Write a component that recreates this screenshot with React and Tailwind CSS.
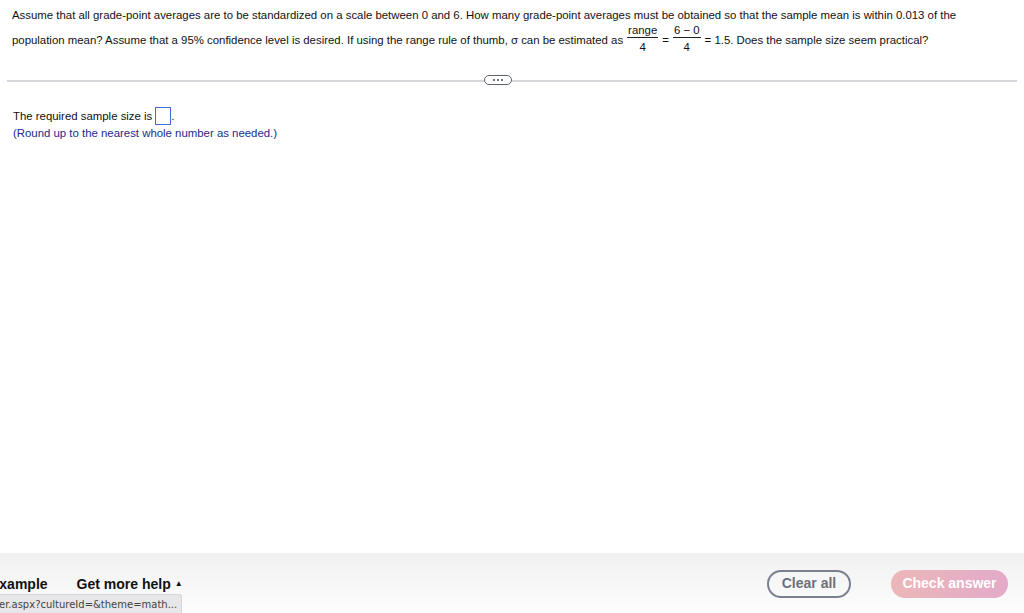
import React from "react";

function Frac({ num, den }) {
  return (
    <span className="inline-flex flex-col items-center align-middle mx-[4px] relative top-[-1px]">
      <span className="px-[1px] leading-[14px]">{num}</span>
      <span className="w-full h-px bg-[#222]"></span>
      <span className="leading-[14px] mt-[2px]">{den}</span>
    </span>
  );
}

export default function App() {
  return (
    <div
      className="relative w-[1024px] h-[613px] bg-white flex flex-col overflow-hidden text-[#111]"
      style={{ fontFamily: '"Liberation Sans", Arial, sans-serif' }}
    >
      <div className="pl-[12px] pt-[8px] text-[11.4px]">
        <div className="leading-[14px]">
          Assume that all grade-point averages are to be standardized on a scale between 0 and 6. How many grade-point averages must be obtained so that the sample mean is within 0.013 of the
        </div>
        <div className="mt-[2px] flex items-center leading-[14px]">
          <span>population mean? Assume that a 95% confidence level is desired. If using the range rule of thumb, σ can be estimated as</span>
          <Frac num="range" den="4" />
          <span>=</span>
          <Frac num="6 − 0" den="4" />
          <span>= 1.5. Does the sample size seem practical?</span>
        </div>
      </div>

      <div className="relative mt-[25px] mx-[7px] h-[2px] bg-[#d6d6da]">
        <div className="absolute left-[477px] top-[-5px] w-[28px] h-[10px] rounded-full border border-[#5d6470] bg-white flex items-center justify-center gap-[2px]">
          <span className="w-[2px] h-[2px] bg-[#3a4150] rounded-full"></span>
          <span className="w-[2px] h-[2px] bg-[#3a4150] rounded-full"></span>
          <span className="w-[2px] h-[2px] bg-[#3a4150] rounded-full"></span>
        </div>
      </div>

      <div className="pl-[13px] pt-[25px] text-[11.4px]">
        <div className="flex items-center leading-[18px]">
          <span>The required sample size is</span>
          <span className="inline-block w-[16px] h-[18px] border border-[#3b6fd6] ml-[3px]"></span>
          <span>.</span>
        </div>
        <div className="text-[#1b2a8c] leading-[14px] mt-[1px]">
          (Round up to the nearest whole number as needed.)
        </div>
      </div>

      <div className="flex-1"></div>

      <div className="h-[60px] bg-gradient-to-b from-[#f1f1f1] to-[#fdfdfd] flex items-center justify-between pt-[1px]">
        <div className="flex items-center pt-[1px]">
          <span className="text-[14px] font-bold text-[#111] ml-[-10px]">Example</span>
          <span className="text-[14px] font-bold text-[#111] ml-[29px]">Get more help</span>
          <span className="text-[8px] ml-[4px] text-[#111]">▲</span>
        </div>
        <div className="flex items-center">
          <button className="w-[84px] h-[28px] rounded-full border-2 border-[#7b8090] text-[#6b7080] text-[14px] font-bold flex items-center justify-center">
            Clear all
          </button>
          <button className="ml-[40px] mr-[16px] w-[117px] h-[28px] rounded-full bg-gradient-to-r from-[#ecb7b8] to-[#e3aac9] text-white text-[14px] font-bold flex items-center justify-center">
            Check answer
          </button>
        </div>
      </div>

      <div className="absolute left-0 bottom-0 w-[182px] h-[19px] bg-[#e7e7ea] rounded-tr-[3px] border-t border-r border-[#d6d6da] flex items-center overflow-hidden">
        <span className="text-[10px] text-[#444] whitespace-nowrap ml-[-1px]" style={{ fontFamily: '"DejaVu Sans", "Liberation Sans", sans-serif' }}>
          er.aspx?cultureId=&amp;theme=math...
        </span>
      </div>
    </div>
  );
}
